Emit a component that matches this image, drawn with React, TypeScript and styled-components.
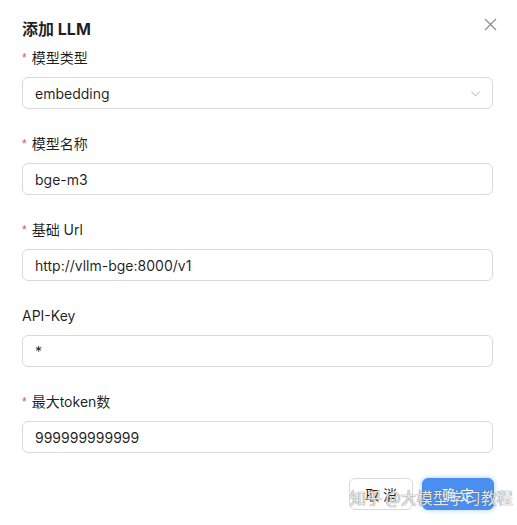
import React from "react";
import styled, { createGlobalStyle } from "styled-components";

const Global = createGlobalStyle`
  html, body { margin: 0; padding: 0; background: #ffffff; }
  body { font-family: Inter, "Noto Sans CJK SC", sans-serif; color: rgba(0,0,0,0.88); }
  * { box-sizing: border-box; }
`;

const Dialog = styled.div`
  position: relative;
  width: 517px;
  height: 525px;
  padding: 16px 24px 0 22px;
  background: #fff;
  display: flex;
  flex-direction: column;
`;

const Header = styled.div`
  display: flex;
  align-items: center;
  justify-content: space-between;
  height: 24px;
  margin-bottom: 7px;
`;

const Title = styled.div`
  font-size: 16px;
  font-weight: 700;
  line-height: 24px;
  margin-top: 1px;
  color: rgba(0,0,0,0.88);
`;

const Close = styled.button`
  border: none;
  background: transparent;
  padding: 0;
  width: 16px;
  height: 16px;
  margin-right: -5px;
  margin-top: -8px;
  display: flex;
  align-items: center;
  justify-content: center;
  color: #8c8c8c;
`;

const Field = styled.div`
  display: flex;
  flex-direction: column;
  margin-bottom: 24px;
`;

const Label = styled.div`
  font-size: 14px;
  line-height: 22px;
  padding-bottom: 8px;
  display: flex;
  align-items: center;
  color: rgba(0,0,0,0.88);
`;

const Star = styled.span`
  color: #b8606a;
  font-size: 12px;
  margin-right: 5px;
  font-family: "Liberation Sans", sans-serif;
`;

const Box = styled.div`
  height: 32px;
  border: 1px solid #d9d9d9;
  border-radius: 6px;
  padding: 0 12px;
  display: flex;
  align-items: center;
  justify-content: space-between;
  font-size: 14px;
  color: rgba(0,0,0,0.88);
  background: #fff;
`;

const Chevron = styled.span`
  display: flex;
  color: #c4c4c4;
  margin-right: -1px;
`;

const Footer = styled.div`
  display: flex;
  justify-content: flex-end;
  gap: 9px;
  margin-top: 1px;
  margin-right: -1px;
`;

const Button = styled.button<{ $primary?: boolean }>`
  height: 32px;
  padding: 0 ${(p) => (p.$primary ? "19px" : "15px")};
  border-radius: 6px;
  font-size: 14px;
  font-family: Inter, "Noto Sans CJK SC", sans-serif;
  white-space: pre;
  border: 1px solid ${(p) => (p.$primary ? "#4a8ff0" : "#d9d9d9")};
  background: ${(p) => (p.$primary ? "#4a8ff0" : "#fff")};
  color: ${(p) => (p.$primary ? "#fff" : "rgba(0,0,0,0.88)")};
  box-shadow: ${(p) => (p.$primary ? "0 0 4px 1px rgba(74,143,240,0.35)" : "none")};
`;

const Watermark = styled.div`
  position: absolute;
  left: 350px;
  top: 485px;
  font-size: 16px;
  line-height: 24px;
  color: rgba(255,255,255,0.85);
  text-shadow: 0 0 1px rgba(90,90,90,0.8), 0 0 1px rgba(90,90,90,0.6);
  white-space: nowrap;
  pointer-events: none;
  font-family: "Noto Sans CJK SC", sans-serif;
`;

const fields: { label: string; value: string; required: boolean; select?: boolean }[] = [
  { label: "模型类型", value: "embedding", required: true, select: true },
  { label: "模型名称", value: "bge-m3", required: true },
  { label: "基础 Url", value: "http://vllm-bge:8000/v1", required: true },
  { label: "API-Key", value: "*", required: false },
  { label: "最大token数", value: "999999999999", required: true },
];

export default function App() {
  return (
    <>
      <Global />
      <Dialog>
        <Header>
          <Title>添加 LLM</Title>
          <Close aria-label="close">
            <svg width="13" height="13" viewBox="0 0 13 13" fill="none" stroke="currentColor" strokeWidth="1.2">
              <path d="M1 1L12 12M12 1L1 12" />
            </svg>
          </Close>
        </Header>
        {fields.map((f) => (
          <Field key={f.label}>
            <Label>
              {f.required && <Star>*</Star>}
              {f.label}
            </Label>
            <Box>
              <span>{f.value}</span>
              {f.select && (
                <Chevron>
                  <svg width="11" height="11" viewBox="0 0 12 12" fill="none" stroke="currentColor" strokeWidth="1.1">
                    <path d="M1.5 4L6 8.5L10.5 4" />
                  </svg>
                </Chevron>
              )}
            </Box>
          </Field>
        ))}
        <Footer>
          <Button>取 消</Button>
          <Button $primary>确 定</Button>
        </Footer>
        <Watermark>知乎 @大模型学习教程</Watermark>
      </Dialog>
    </>
  );
}
